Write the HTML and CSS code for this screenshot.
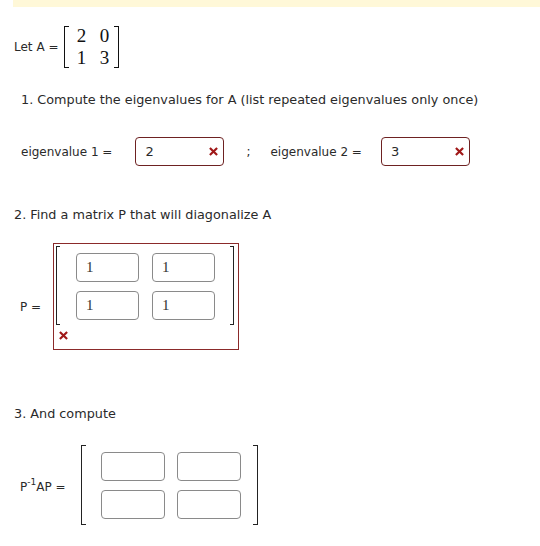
FILE: index.html
```html
<!DOCTYPE html>
<html>
<head>
<meta charset="utf-8">
<link rel="stylesheet" href="styles.css">
</head>
<body>
<div class="banner"></div>

<div class="leta">
  <span class="label">Let A =</span>
  <div class="amatrix">
    <div class="br br-l"></div>
    <div class="agrid">
      <span>2</span><span>0</span>
      <span>1</span><span>3</span>
    </div>
    <div class="br br-r"></div>
  </div>
</div>

<p class="q q1">1. Compute the eigenvalues for A (list repeated eigenvalues only once)</p>

<div class="evrow">
  <span class="label">eigenvalue 1 =</span>
  <div class="ans ans1"><span class="val">2</span><svg class="xmark" viewBox="0 0 10 10" width="9" height="9"><path d="M1 1L9 9M9 1L1 9"/></svg></div>
  <span class="semi">;</span>
  <span class="label">eigenvalue 2 =</span>
  <div class="ans ans2"><span class="val">3</span><svg class="xmark" viewBox="0 0 10 10" width="9" height="9"><path d="M1 1L9 9M9 1L1 9"/></svg></div>
</div>

<p class="q q2">2. Find a matrix P that will diagonalize A</p>

<div class="prow">
  <span class="label plabel">P =</span>
  <div class="pbox">
    <div class="mat">
      <div class="mbr mbr-l"></div>
      <div class="cells">
        <div class="cell serif">1</div><div class="cell serif">1</div>
        <div class="cell serif">1</div><div class="cell serif">1</div>
      </div>
      <div class="mbr mbr-r"></div>
    </div>
    <svg class="xmark pmark" viewBox="0 0 10 10" width="9" height="9"><path d="M1 1L9 9M9 1L1 9"/></svg>
  </div>
</div>

<p class="q q3">3. And compute</p>

<div class="drow">
  <span class="label dlabel">P<sup>-1</sup>AP =</span>
  <div class="mat dmat">
    <div class="mbr mbr-l dbr"></div>
    <div class="cells dcells">
      <div class="cell"></div><div class="cell"></div>
      <div class="cell"></div><div class="cell"></div>
    </div>
    <div class="mbr mbr-r dbr"></div>
  </div>
</div>
</body>
</html>
```

FILE: styles.css
```css
* { box-sizing: border-box; }
body {
  margin: 0;
  background: #fff;
  color: #2a2a2a;
  font-family: "DejaVu Sans", Verdana, sans-serif;
  font-size: 12px;
  width: 540px;
  height: 546px;
  overflow: hidden;
}
.banner {
  margin-left: 13px;
  height: 7px;
  background: #fff8d8;
}
.leta {
  display: flex;
  align-items: center;
  padding-left: 14px;
  margin-top: 19px;
}
.amatrix {
  display: flex;
  align-items: stretch;
  margin-left: 6px;
  height: 42px;
}
.br {
  width: 5px;
  border-top: 1.5px solid #111;
  border-bottom: 1.5px solid #111;
}
.br-l { border-left: 1.5px solid #111; }
.br-r { border-right: 1.5px solid #111; }
.agrid {
  display: grid;
  grid-template-columns: 10px 10px;
  column-gap: 13px;
  padding: 0 5px 0 7px;
  align-content: center;
  row-gap: 2px;
  font-family: "Liberation Serif", "Times New Roman", serif;
  font-size: 19px;
  line-height: 20px;
  color: #111;
  text-align: center;
}
.q {
  margin: 0;
  font-size: 12.8px;
}
.q1 {
  padding-left: 21px;
  margin-top: 24px;
}
.evrow {
  display: flex;
  align-items: center;
  padding-left: 21px;
  margin-top: 30px;
}
.ans {
  display: flex;
  align-items: center;
  justify-content: space-between;
  width: 89px;
  height: 29px;
  border: 1px solid #6e2222;
  border-radius: 4px;
  padding: 0 5px 0 9px;
  font-size: 13px;
}
.ans1 { margin-left: 23px; }
.ans2 { margin-left: 19px; }
.semi { margin: 0 20px 0 22px; }
.xmark {
  fill: none;
  stroke: #a01818;
  stroke-width: 2.4;
}
.q2 {
  padding-left: 14px;
  margin-top: 41px;
}
.prow {
  display: flex;
  align-items: flex-start;
  padding-left: 20px;
  margin-top: 21px;
}
.plabel { margin-top: 57px; }
.pbox {
  width: 186px;
  height: 107px;
  border: 1px solid #8b2a2a;
  margin-left: 12px;
  padding: 2px 2px 0 2px;
}
.mat {
  display: flex;
  align-items: stretch;
}
.mbr {
  width: 4px;
  border-top: 1px solid #222;
  border-bottom: 1px solid #222;
}
.mbr-l { border-left: 1.5px solid #222; }
.mbr-r { border-right: 1.5px solid #222; }
.cells {
  display: grid;
  grid-template-columns: 63px 63px;
  column-gap: 13px;
  row-gap: 9px;
  padding: 7px 15px 5px 16px;
}
.cell {
  height: 29px;
  border: 1px solid #8a8a8a;
  border-radius: 4px;
  padding-left: 9px;
  line-height: 26px;
}
.serif {
  font-family: "Liberation Serif", "Times New Roman", serif;
  font-size: 15px;
  color: #333;
}
.pmark {
  display: block;
  margin: 6px 0 0 3px;
}
.q3 {
  padding-left: 14px;
  margin-top: 56px;
}
.drow {
  display: flex;
  align-items: center;
  padding-left: 20px;
  margin-top: 24px;
}
.dlabel sup {
  font-size: 9px;
  vertical-align: 6px;
}
.dmat { margin-left: 15px; }
.dbr { width: 5px; }
.dcells {
  grid-template-columns: 64px 64px;
  padding: 7px 12px 6px 15px;
  column-gap: 12px;
}
```
